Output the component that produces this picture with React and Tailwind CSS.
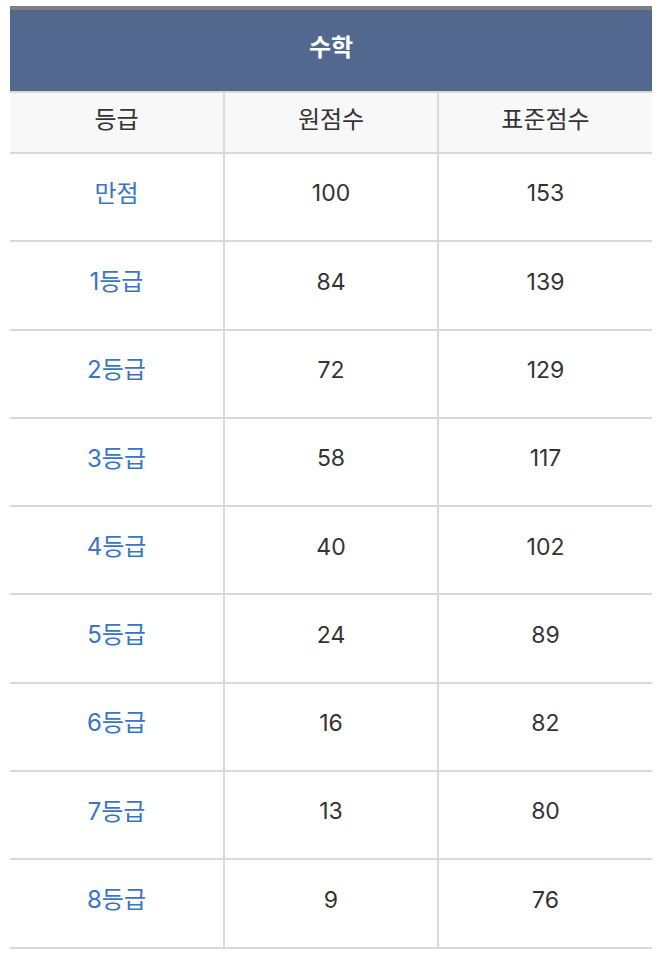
const rows = [
  ["만점", 100, 153],
  ["1등급", 84, 139],
  ["2등급", 72, 129],
  ["3등급", 58, 117],
  ["4등급", 40, 102],
  ["5등급", 24, 89],
  ["6등급", 16, 82],
  ["7등급", 13, 80],
  ["8등급", 9, 76],
];

export default function App() {
  return (
    <div
      className="bg-white min-h-screen pt-[6px] px-[6px]"
      style={{ fontFamily: 'Inter, "Noto Sans CJK KR", "Noto Sans", sans-serif' }}
    >
      <table className="w-[642px] ml-[4px] border-collapse table-fixed text-[24px] text-[#333]">
        <thead>
          <tr>
            <th
              colSpan={3}
              className="h-[84px] pb-[6px] bg-[#52688f] text-white font-bold border-t-4 border-t-[#7f7f7f] border-b-2 border-b-[#d9d9d9]"
            >
              수학
            </th>
          </tr>
          <tr className="bg-[#f8f8f8]">
            <th className="h-[61px] pb-[6px] font-normal border-b-2 border-r-2 border-[#d9d9d9]">등급</th>
            <th className="h-[61px] pb-[6px] font-normal border-b-2 border-r-2 border-[#d9d9d9]">원점수</th>
            <th className="h-[61px] pb-[6px] font-normal border-b-2 border-[#d9d9d9]">표준점수</th>
          </tr>
        </thead>
        <tbody>
          {rows.map(([grade, raw, std]) => (
            <tr key={grade}>
              <td className="h-[88.3px] pb-[7px] text-center text-[#3a74c8] border-b-2 border-r-2 border-[#d9d9d9]">
                {grade}
              </td>
              <td className="h-[88.3px] pb-[7px] text-center text-[23px] border-b-2 border-r-2 border-[#d9d9d9]">{raw}</td>
              <td className="h-[88.3px] pb-[7px] text-center text-[23px] border-b-2 border-[#d9d9d9]">{std}</td>
            </tr>
          ))}
        </tbody>
      </table>
    </div>
  );
}
